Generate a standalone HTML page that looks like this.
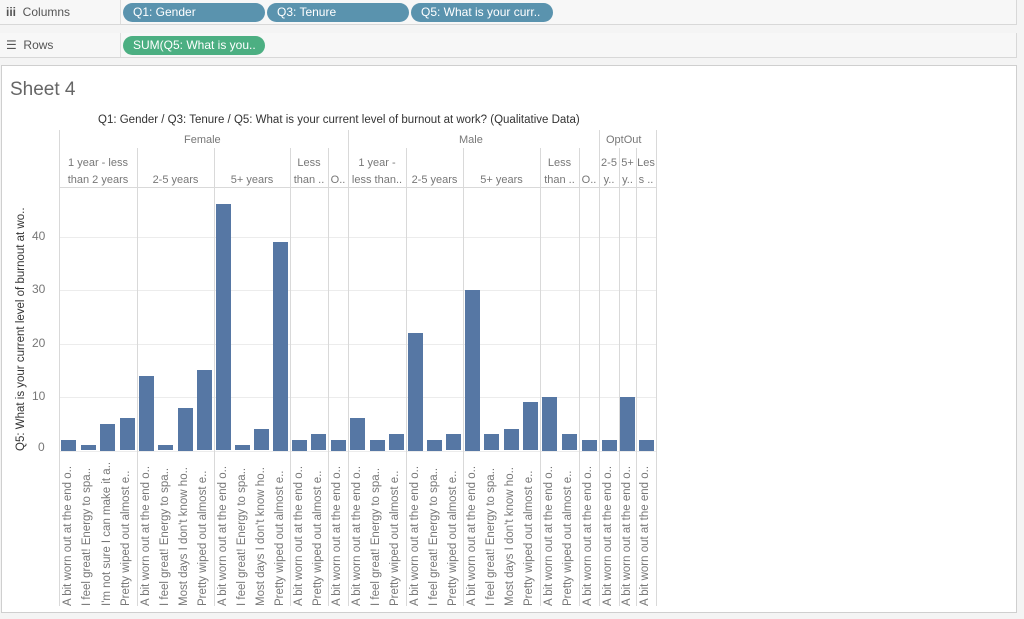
<!DOCTYPE html>
<html><head><meta charset="utf-8"><style>
*{margin:0;padding:0;box-sizing:border-box}
body{width:1024px;height:619px;background:#f4f4f4;font-family:"Liberation Sans",sans-serif;position:relative;overflow:hidden}
.shelf{position:absolute;left:0;width:1017px;height:25px;background:#f7f7f7;border-bottom:1px solid #d8d8d8;border-right:1px solid #d8d8d8}
.shelf .lbl{position:absolute;left:6px;top:5px;font-size:12px;color:#555}
.shelf .div{position:absolute;left:120px;top:0;bottom:0;border-left:1px solid #ddd}
.pill{position:absolute;top:3px;height:19px;border-radius:10px;color:#fff;font-size:12px;line-height:19px;padding-left:10px}
.b{background:#5a93ae}.g{background:#4caf82}
#panel{position:absolute;left:1px;top:65px;width:1016px;height:548px;background:#fff;border:1px solid #cfcfcf}
.t{position:absolute;font-size:11px;color:#777;white-space:nowrap}
.vl{position:absolute;width:1px;background:#d9d9d9}
.hl{position:absolute;height:1px;background:#ececec}
.bar{position:absolute;background:#5677a4}
.xl{position:absolute;font-size:11.5px;color:#777;white-space:nowrap;transform-origin:0 0;transform:rotate(-90deg)}
</style></head><body>
<div class="shelf" style="top:0"><span class="lbl"><b style="font-weight:bold">iii</b>&nbsp; Columns</span><div class="div"></div>
<div class="pill b" style="left:123px;width:142px">Q1: Gender</div>
<div class="pill b" style="left:267px;width:142px">Q3: Tenure</div>
<div class="pill b" style="left:411px;width:142px">Q5: What is your curr..</div></div>
<div class="shelf" style="top:33px"><span class="lbl">☰&nbsp; Rows</span><div class="div"></div>
<div class="pill g" style="left:123px;width:142px">SUM(Q5: What is you..</div></div>
<div id="panel"></div>
<div class="t" style="left:10px;top:79px;font-size:19px;color:#666">Sheet 4</div>
<div class="t" style="left:98px;top:114px;font-size:11.5px;color:#333">Q1: Gender / Q3: Tenure / Q5: What is your current level of burnout at work? (Qualitative Data)</div>
<div class="t" style="left:15px;top:451px;font-size:11.5px;color:#333;transform-origin:0 0;transform:rotate(-90deg)">Q5: What is your current level of burnout at wo..</div>
<div id="c"></div>
<script>
var c=document.getElementById('c'),h='';
function add(s){h+=s}
[0,10,20,30,40].forEach(function(v){var y=450.5-v*5.35;add('<div class="hl" style="left:60px;width:596px;top:'+Math.round(y)+'px"></div>');add('<div class="t" style="left:'+(v?32:38)+'px;top:'+Math.round(y-(v?8:11))+'px;font-size:12px">'+v+'</div>')});
add('<div style="position:absolute;left:60px;width:596px;top:187px;height:1px;background:#d9d9d9"></div>');
var vlines=[[59,130,606],[348,130,606],[599,130,606],[656,130,606],[137,148,606],[214,148,606],[290,148,606],[328,148,606],[406,148,606],[463,148,606],[540,148,606],[579,148,606],[619,148,606],[636,148,606]];
vlines.forEach(function(l){add('<div class="vl" style="left:'+l[0]+'px;top:'+l[1]+'px;height:'+(l[2]-l[1])+'px"></div>')});
add('<div class="t" style="left:184px;top:134px">Female</div><div class="t" style="left:459px;top:134px">Male</div><div class="t" style="left:606px;top:134px">OptOut</div>');
var sub=[[59,137,'1 year - less','than 2 years'],[137,214,'','2-5 years'],[214,290,'','5+ years'],[290,328,'Less','than ..'],[328,348,'','O..'],[348,406,'1 year -','less than..'],[406,463,'','2-5 years'],[463,540,'','5+ years'],[540,579,'Less','than ..'],[579,599,'','O..'],[599,619,'2-5','y..'],[619,636,'5+','y..'],[636,656,'Les','s ..']];
sub.forEach(function(s){var w=s[1]-s[0];add('<div class="t" style="left:'+s[0]+'px;width:'+w+'px;text-align:center;top:157px;overflow:hidden">'+s[2]+'</div><div class="t" style="left:'+s[0]+'px;width:'+w+'px;text-align:center;top:174px;overflow:hidden">'+s[3]+'</div>')});
var A='A bit worn out at the end o..',I='I feel great! Energy to spa..',N="I'm not sure I can make it a..",P='Pretty wiped out almost e..',M="Most days I don't know ho..";
var groups=[[59,137,[[A,2],[I,1],[N,5],[P,6]]],[137,214,[[A,14],[I,1],[M,8],[P,15]]],[214,290,[[A,46],[I,1],[M,4],[P,39]]],[290,328,[[A,2],[P,3]]],[328,348,[[A,2]]],[348,406,[[A,6],[I,2],[P,3]]],[406,463,[[A,22],[I,2],[P,3]]],[463,540,[[A,30],[I,3],[M,4],[P,9]]],[540,579,[[A,10],[P,3]]],[579,599,[[A,2]]],[599,619,[[A,2]]],[619,636,[[A,10]]],[636,656,[[A,2]]]];
groups.forEach(function(g){var n=g[2].length,w=(g[1]-g[0])/n;g[2].forEach(function(b,i){var cx=g[0]+w*i+w/2,hh=b[1]*5.35;add('<div class="bar" style="left:'+Math.round(cx-7.5)+'px;width:15px;top:'+Math.round(450.5-hh)+'px;height:'+Math.round(hh)+'px"></div>');add('<div class="xl" style="left:'+Math.round(cx-7)+'px;top:606px">'+b[0]+'</div>')})});
c.innerHTML=h;
</script>
</body></html>
